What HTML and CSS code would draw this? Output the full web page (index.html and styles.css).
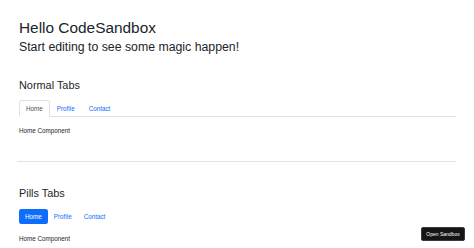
FILE: index.html
```html
<!DOCTYPE html>
<html lang="en">
<head>
    <meta charset="UTF-8">
    <meta name="viewport" content="width=device-width, initial-scale=1.0">
    <title>CodeSandbox</title>
    <link rel="stylesheet" href="styles.css">
</head>
<body>
    <div class="app">
        <h1 class="title">Hello CodeSandbox</h1>
        <h2 class="subtitle">Start editing to see some magic happen!</h2>

        <div class="section">
            <h3 class="section-title">Normal Tabs</h3>
            <ul class="nav nav-tabs">
                <li><a class="nav-link active">Home</a></li>
                <li><a class="nav-link">Profile</a></li>
                <li><a class="nav-link">Contact</a></li>
            </ul>
            <div class="tab-content">Home Component</div>
        </div>

        <hr class="divider">

        <div class="section">
            <h3 class="section-title pills-title">Pills Tabs</h3>
            <ul class="nav nav-pills">
                <li><a class="nav-link active">Home</a></li>
                <li><a class="nav-link">Profile</a></li>
                <li><a class="nav-link">Contact</a></li>
            </ul>
            <div class="tab-content pills-content">Home Component</div>
        </div>
    </div>

    <!-- codesandbox overlay button -->
    <a class="open-sandbox">Open Sandbox</a>
</body>
</html>
```

FILE: styles.css
```css
* { margin: 0; padding: 0; box-sizing: border-box; }
li { list-style: none; }
body, html {
    width: 100%;
    height: 100%;
    background: #fff;
}
body {
    font-family: "Liberation Sans", Arial, sans-serif;
    color: #212529;
    overflow: hidden;
}
.app {
    padding: 0 18px 0 19px;
}
.title {
    font-size: 15.4px;
    font-weight: 400;
    line-height: 1.2;
    margin-top: 19.3px;
}
.subtitle {
    font-size: 12.3px;
    font-weight: 400;
    line-height: 1.2;
    margin-top: 2.5px;
}
.section-title {
    font-size: 10.9px;
    font-weight: 400;
    line-height: 1.2;
    margin-top: 24.3px;
}
.pills-title {
    margin-top: 24.6px;
}
.nav {
    display: flex;
    margin-top: 7.4px;
    font-size: 6.3px;
    line-height: 1.5;
}
.nav-pills {
    margin-top: 9.1px;
}
.nav-link {
    display: block;
    padding: 3px 6px;
    color: #0d6efd;
    cursor: pointer;
}
/* tabs */
.nav-tabs {
    border-bottom: 1px solid #dee2e6;
}
.nav-tabs .nav-link {
    border: 1px solid transparent;
    border-radius: 2.3px 2.3px 0 0;
    margin-bottom: -1px;
}
.nav-tabs .nav-link.active {
    color: #495057;
    background: #fff;
    border-color: #dee2e6 #dee2e6 #fff;
}
/* pills */
.nav-pills .nav-link {
    border-radius: 2.3px;
}
.nav-pills .nav-link.active {
    color: #fff;
    background: #0d6efd;
}
.tab-content {
    font-size: 6.3px;
    line-height: 1.5;
    margin-top: 8.9px;
}
.pills-content {
    margin-top: 9.9px;
}
.divider {
    border: 0;
    border-top: 1px solid #e2e2e2;
    margin: 25.5px 0 0 -2px;
}
.open-sandbox {
    position: fixed;
    right: 9px;
    bottom: 7px;
    width: 44px;
    height: 14px;
    display: flex;
    align-items: center;
    justify-content: center;
    background: #151515;
    border: 1px solid #3a3a3a;
    border-radius: 2px;
    color: #fff;
    font-size: 5px;
}
```
